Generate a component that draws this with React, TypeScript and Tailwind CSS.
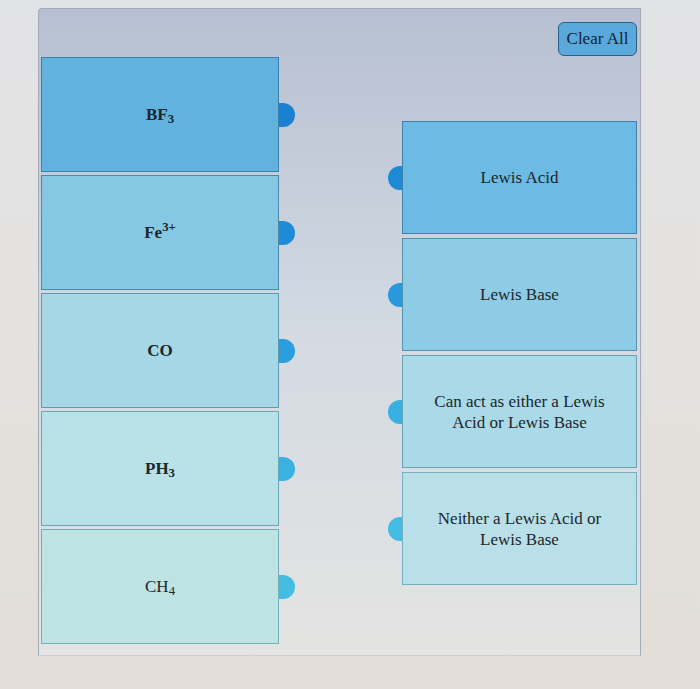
import type { ReactNode } from "react";

type Item = { key: string; label: ReactNode; bold?: boolean; bg: string; border: string; tab: string };

const compounds: Item[] = [
  { key: "bf3", label: <>BF<sub>3</sub></>, bold: true, bg: "bg-[#62b2e0]", border: "border-[#3b7fa6]", tab: "bg-[#1c80d2]" },
  { key: "fe", label: <>Fe<sup>3+</sup></>, bold: true, bg: "bg-[#86c7e4]", border: "border-[#4a8aa8]", tab: "bg-[#1f8ad8]" },
  { key: "co", label: <>CO</>, bold: true, bg: "bg-[#a6d7e6]", border: "border-[#5f9ab0]", tab: "bg-[#2a9ede]" },
  { key: "ph3", label: <>PH<sub>3</sub></>, bold: true, bg: "bg-[#b8e1e8]", border: "border-[#6aa6b8]", tab: "bg-[#39b2e2]" },
  { key: "ch4", label: <>CH<sub>4</sub></>, bg: "bg-[#bde3e2]", border: "border-[#72adbb]", tab: "bg-[#45bde0]" },
];

const answers: Item[] = [
  { key: "acid", label: "Lewis Acid", bg: "bg-[#6cbbe5]", border: "border-[#3f83a8]", tab: "bg-[#1d8ad6]" },
  { key: "base", label: "Lewis Base", bg: "bg-[#8ecce6]", border: "border-[#5592ae]", tab: "bg-[#2799dc]" },
  { key: "either", label: "Can act as either a Lewis Acid or Lewis Base", bg: "bg-[#aad9e8]", border: "border-[#66a2b6]", tab: "bg-[#38b0e2]" },
  { key: "neither", label: "Neither a Lewis Acid or Lewis Base", bg: "bg-[#b9e0e9]", border: "border-[#75b0c0]", tab: "bg-[#44bbe2]" },
];

function CompoundCard({ item }: { item: Item }) {
  return (
    <div className="flex items-center">
      <div
        className={`flex h-[115px] w-[238px] items-center justify-center border text-[17px] text-[#1c262c] ${item.bg} ${item.border} ${item.bold ? "font-bold" : ""}`}
      >
        <span>{item.label}</span>
      </div>
      <div className={`h-6 w-4 rounded-r-full ${item.tab}`} />
    </div>
  );
}

function AnswerCard({ item }: { item: Item }) {
  return (
    <div className="flex items-center">
      <div className={`h-6 w-[14px] rounded-l-full ${item.tab}`} />
      <div
        className={`flex h-[113px] w-[235px] items-center justify-center border px-6 text-center text-[17px] leading-[21px] text-[#1c262c] ${item.bg} ${item.border}`}
      >
        <span>{item.label}</span>
      </div>
    </div>
  );
}

export default function App() {
  return (
    <div className="h-[689px] w-[700px] overflow-hidden bg-gradient-to-b from-[#e2e3e6] via-[#e4e2df] to-[#e2ddd6] pt-2 pl-[38px] font-['Liberation_Serif',serif]">
      <div className="flex h-[648px] w-[603px] flex-col rounded-tl-sm border border-[#a4abb8] border-b-[#ccd0d4] bg-gradient-to-b from-[#b7c0d2] via-[#d3dae2] to-[#e4e4e2] pt-[13px] pr-[3px] pl-[2px]">
        <div className="flex justify-end">
          <button className="h-[34px] w-[79px] rounded-md border border-[#2f5f82] bg-[#5aa9dc] text-[17px] text-[#17222c]">
            Clear All
          </button>
        </div>
        <div className="mt-[1px] flex justify-between">
          <div className="flex flex-col gap-[3px]">
            {compounds.map((c) => (
              <CompoundCard key={c.key} item={c} />
            ))}
          </div>
          <div className="mt-[64px] flex flex-col gap-1">
            {answers.map((a) => (
              <AnswerCard key={a.key} item={a} />
            ))}
          </div>
        </div>
      </div>
    </div>
  );
}
